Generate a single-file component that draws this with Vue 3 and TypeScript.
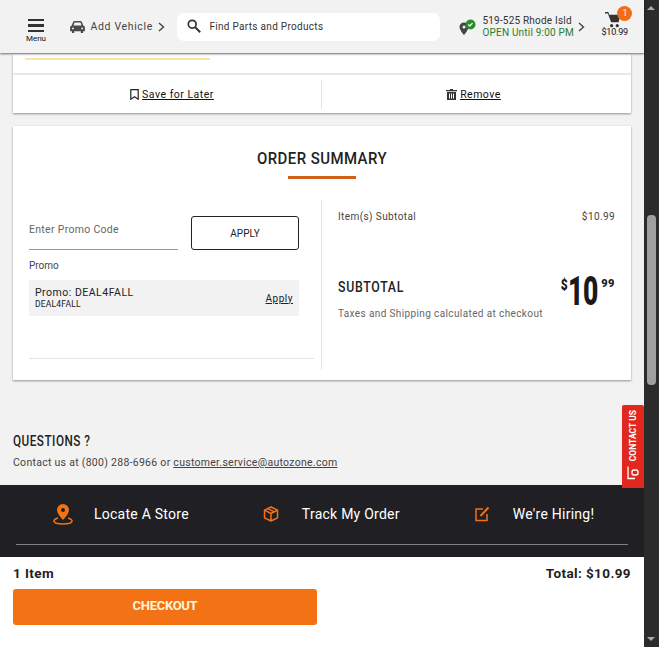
<script setup lang="ts">
const links = [
  { label: "Locate A Store", icon: "pin" },
  { label: "Track My Order", icon: "box" },
  { label: "We're Hiring!", icon: "edit" },
];
</script>

<template>
  <div class="page">
    <div class="main">
      <header class="top">
        <div class="menu">
          <span class="burger"><i></i><i></i><i></i></span>
          <span class="menu-label">Menu</span>
        </div>
        <div class="vehicle">
          <svg class="car" width="15" height="12" viewBox="0 0 16 13"><path fill="#4a4a4a" d="M3.2 1.2C3.5.5 4 0 4.8 0h6.400c.8 0 1.300.5 1.600 1.200L14.200 5c1 .3 1.800 1 1.800 2v4h-2v2h-2.400v-2H4.400v2H2v-2H0V7c0-1 .8-1.700 1.800-2zM4.700 1.600 3.700 4.800h8.600l-1-3.200zM3 7a1 1 0 1 0 0 2 1 1 0 0 0 0-2zm10 0a1 1 0 1 0 0 2 1 1 0 0 0 0-2z"/></svg>
          <span>Add Vehicle</span>
          <svg width="7" height="10" viewBox="0 0 7 10"><path fill="none" stroke="#444" stroke-width="1.400" d="M1 1l4.500 4L1 9"/></svg>
        </div>
        <div class="search">
          <svg width="14" height="14" viewBox="0 0 14 14"><circle cx="5.200" cy="5.200" r="3.900" fill="none" stroke="#333" stroke-width="1.700"/><path stroke="#333" stroke-width="2" d="M8.200 8.200l5 5"/></svg>
          <span>Find Parts and Products</span>
        </div>
        <div class="store">
          <svg class="pin-icon" width="17" height="16" viewBox="0 0 17 16">
            <path fill="#444" d="M5 3.500a4.500 4.500 0 0 1 4.500 4.500C9.500 11 5 16 5 16S.5 11 .5 8A4.500 4.500 0 0 1 5 3.500z"/>
            <circle cx="5" cy="8" r="1.500" fill="#f2f2f2"/>
            <circle cx="11.500" cy="5.500" r="5" fill="#2e8b2e"/>
            <path fill="none" stroke="#fff" stroke-width="1.200" d="M9.200 5.500l1.700 1.500 2.600-2.800"/>
          </svg>
          <div class="store-text">
            <div>519-525 Rhode Isld</div>
            <div class="open">OPEN Until 9:00 PM</div>
          </div>
          <svg width="7" height="10" viewBox="0 0 7 10"><path fill="none" stroke="#444" stroke-width="1.400" d="M1 1l4.500 4L1 9"/></svg>
        </div>
        <div class="cart">
          <svg class="cart-icon" width="17" height="16" viewBox="0 0 18 17"><path fill="#333" d="M0 0h3.500l1 3H16l-1.500 8H6.500L3 1.500H0z"/><circle cx="7" cy="14.500" r="1.700" fill="#333"/><circle cx="13" cy="14.500" r="1.700" fill="#333"/></svg>
          <span class="badge">1</span>
          <span class="cart-price">$10.99</span>
        </div>
      </header>

      <main class="content">
        <section class="card item-card">
          <div class="yellow"></div>
          <div class="actions">
            <div class="action save">
              <svg width="9" height="11" viewBox="0 0 9 11"><path fill="none" stroke="#222" stroke-width="1.200" d="M.8.7h7.400v9.500L4.500 7.800.8 10.200z"/></svg>
              <a>Save for Later</a>
            </div>
            <div class="action remove">
              <svg width="11" height="11" viewBox="0 0 11 11"><path fill="#333" d="M4 0h3v1h4v1.200H0V1h4zM1 3h9v8H1zm2 1.500v5h1v-5zm2 0v5h1v-5zm2 0v5h1v-5z"/></svg>
              <a>Remove</a>
            </div>
          </div>
        </section>

        <section class="card summary">
          <h2>ORDER SUMMARY</h2>
          <div class="rule"></div>
          <div class="columns">
            <div class="left">
              <div class="promo-form">
                <div class="promo-input">Enter Promo Code</div>
                <button class="apply-btn">APPLY</button>
              </div>
              <div class="promo-label">Promo</div>
              <div class="promo-box">
                <div>
                  <div class="promo-title">Promo: DEAL4FALL</div>
                  <div class="promo-code">DEAL4FALL</div>
                </div>
                <a class="promo-apply">Apply</a>
              </div>
              <div class="left-line"></div>
            </div>
            <div class="right">
              <div class="line-item"><span>Item(s) Subtotal</span><span>$10.99</span></div>
              <div class="subtotal">
                <div>
                  <div class="subtotal-label">SUBTOTAL</div>
                  <div class="taxes">Taxes and Shipping calculated at checkout</div>
                </div>
                <div class="price"><sup>$</sup><b>10</b><sup class="cents">99</sup></div>
              </div>
            </div>
          </div>
        </section>

        <section class="questions">
          <h3>QUESTIONS ?</h3>
          <p>Contact us at (800) 288-6966 or <a>customer.service@autozone.com</a></p>
        </section>
      </main>

      <footer class="dark">
        <div class="dark-links">
          <div v-for="l in links" :key="l.label" class="dark-link" :class="l.icon">
            <svg v-if="l.icon === 'pin'" width="22" height="22" viewBox="0 0 22 22">
              <path fill="#f37216" d="M11 1a6 6 0 0 1 6 6c0 4-6 10-6 10S5 11 5 7a6 6 0 0 1 6-6z"/>
              <circle cx="11" cy="7" r="2" fill="#1f1f24"/>
              <path fill="none" stroke="#f37216" stroke-width="1.500" d="M6 15c-3 1-4.500 2-4 3.500C2.500 20 7 21 11 21s8.500-1 9-2.500c.5-1.500-1-2.500-4-3.500"/>
            </svg>
            <svg v-else-if="l.icon === 'box'" width="16" height="16" viewBox="0 0 16 16">
              <path fill="none" stroke="#f37216" stroke-width="1.500" stroke-linejoin="round" d="M8 1l6.500 3.200v7.600L8 15l-6.500-3.200V4.200zM1.500 4.200 8 7.500l6.500-3.300M8 7.500V15M4.700 2.600l6.500 3.300"/>
            </svg>
            <svg v-else width="16" height="16" viewBox="0 0 16 16">
              <path fill="none" stroke="#f37216" stroke-width="1.500" d="M9 3H2v11.500h11V8"/>
              <path stroke="#f37216" stroke-width="2" d="M6.500 10 14.500 1.500"/>
            </svg>
            <span>{{ l.label }}</span>
          </div>
        </div>
        <div class="dark-line"></div>
      </footer>

      <div class="checkout-bar">
        <div class="checkout-row"><span>1 Item</span><span>Total: $10.99</span></div>
        <button class="checkout">CHECKOUT</button>
      </div>

      <div class="contact-tab">
        <span>CONTACT US</span>
        <svg width="13" height="15" viewBox="0 0 13 15"><path fill="none" stroke="#fff" stroke-width="1.300" d="M1 1.500v12h7"/><rect x="5" y="5" width="6" height="5" rx="2" fill="none" stroke="#fff" stroke-width="1.300"/></svg>
      </div>
    </div>

    <aside class="scrollbar">
      <span class="arrow up"></span>
      <span class="thumb"></span>
      <span class="arrow down"></span>
    </aside>
  </div>
</template>

<style scoped>
.page {
  display: flex;
  width: 659px;
  height: 647px;
  overflow: hidden;
  background: #f2f2f2;
  color: #222;
  font-family: Roboto, "Liberation Sans", sans-serif;
  font-size: 10.5px;
  letter-spacing: 0.5px;
}
.main {
  position: relative;
  width: 644px;
  display: flex;
  flex-direction: column;
}
.top {
  position: relative;
  z-index: 2;
  height: 53px;
  box-sizing: border-box;
  flex: none;
  display: flex;
  align-items: center;
  background: #f2f2f2;
  box-shadow: 0 1px 2px rgba(0, 0, 0, 0.55);
}
.menu {
  width: 32px;
  margin-left: 20px;
  display: flex;
  flex-direction: column;
  align-items: center;
  padding-top: 9px;
}
.burger {
  display: flex;
  flex-direction: column;
  gap: 3px;
}
.burger i {
  display: block;
  width: 16px;
  height: 2.5px;
  background: #333;
}
.menu-label {
  font-size: 8px;
  letter-spacing: 0;
  margin-top: 2px;
  color: #111;
}
.vehicle {
  display: flex;
  align-items: center;
  gap: 5.5px;
  margin-left: 18px;
  color: #444;
  letter-spacing: 0.65px;
}
.search {
  width: 263px;
  height: 28px;
  box-sizing: border-box;
  margin-left: 12px;
  padding: 0 0 1px 10px;
  background: #fff;
  border-radius: 7px;
  display: flex;
  align-items: center;
  gap: 8px;
  color: #333;
  font-size: 10px;
  letter-spacing: 0.3px;
}
.store {
  margin-left: 19px;
  display: flex;
  align-items: center;
  gap: 6px;
}
.store-text {
  font-size: 10px;
  line-height: 12px;
  letter-spacing: 0.2px;
  color: #333;
  width: 90px;
  white-space: nowrap;
}
.open {
  color: #2c7d2c;
}
.cart {
  position: relative;
  width: 30px;
  height: 36px;
  margin-left: 16px;
}
.cart-icon {
  position: absolute;
  left: 4px;
  top: 3px;
}
.badge {
  position: absolute;
  left: 16px;
  top: -3px;
  width: 15px;
  height: 15px;
  border-radius: 50%;
  background: #f26d14;
  color: #fff;
  font-size: 9px;
  line-height: 15px;
  text-align: center;
  letter-spacing: 0;
}
.cart-price {
  position: absolute;
  left: 0;
  top: 18px;
  font-size: 9px;
  letter-spacing: -0.2px;
  color: #111;
}
.content {
  flex: 1;
  min-height: 0;
  padding: 1px 13px 0;
}
.card {
  width: 618px;
  background: #fff;
  box-shadow: 0 1px 2px rgba(0, 0, 0, 0.4);
}
.item-card {
  height: 59px;
  display: flex;
  flex-direction: column;
}
.yellow {
  width: 185px;
  height: 2px;
  margin: 4px 0 0 12px;
  background: #f9e4a6;
}
.actions {
  margin-top: 13px;
  border-top: 2px solid #e8e8e8;
  flex: 1;
  display: flex;
  align-items: center;
}
.action {
  box-sizing: border-box;
  height: 29px;
  display: flex;
  align-items: center;
  justify-content: center;
  gap: 3px;
}
.action.save {
  width: 309px;
  padding-left: 10px;
  border-right: 1px solid #e4e4e4;
}
.action.remove {
  flex: 1;
  padding-right: 6px;
}
.action a {
  text-decoration: underline;
  color: #111;
}
.summary {
  margin-top: 13px;
  height: 254px;
  box-sizing: border-box;
  padding-top: 22px;
}
h2 {
  margin: 0;
  text-align: center;
  font-size: 17px;
  line-height: 20px;
  font-weight: 500;
  letter-spacing: 0.5px;
  color: #222;
  transform: scaleX(0.88);
}
.rule {
  width: 68px;
  height: 3px;
  margin: 8px auto 0;
  background: #d2601a;
}
.columns {
  display: flex;
  margin-top: 21px;
}
.left {
  flex: none;
  width: 309px;
  height: 170px;
  box-sizing: border-box;
  padding: 16px 0 0 16px;
  border-right: 1px solid #e4e4e4;
}
.promo-form {
  display: flex;
  align-items: flex-start;
  gap: 13px;
  height: 34px;
}
.promo-input {
  width: 149px;
  height: 34px;
  box-sizing: border-box;
  padding-top: 7px;
  border-bottom: 1px solid #999;
  color: #666;
  letter-spacing: 0.3px;
}
.apply-btn {
  width: 108px;
  height: 34px;
  padding-top: 2px;
  background: #fff;
  border: 1px solid #222;
  border-radius: 3px;
  font: inherit;
  font-size: 10px;
  color: #222;
}
.promo-label {
  margin-top: 9px;
  line-height: 13px;
  font-size: 10px;
  letter-spacing: 0;
  color: #444;
}
.promo-box {
  width: 270px;
  height: 36px;
  box-sizing: border-box;
  margin-top: 8px;
  padding: 0 6px;
  background: #f2f2f2;
  display: flex;
  align-items: center;
  justify-content: space-between;
}
.promo-title {
  font-size: 10.5px;
  line-height: 12px;
  letter-spacing: 0.5px;
}
.promo-code {
  font-size: 8.5px;
  line-height: 11px;
  letter-spacing: 0.2px;
}
.promo-apply {
  text-decoration: underline;
  font-size: 10px;
}
.left-line {
  margin-top: 42px;
  width: 285px;
  height: 1px;
  background: #e4e4e4;
}
.right {
  flex: 1;
  min-width: 0;
  padding: 10px 16px 0;
}
.line-item {
  display: flex;
  justify-content: space-between;
  color: #444;
  font-size: 10px;
  letter-spacing: 0.4px;
  line-height: 13px;
}
.subtotal {
  margin-top: 51px;
  display: flex;
  justify-content: space-between;
}
.subtotal-label {
  font-size: 14px;
  line-height: 17px;
  font-weight: 500;
  letter-spacing: 0.8px;
  color: #222;
  margin-top: 5px;
  transform: scaleX(0.88);
  transform-origin: left;
}
.taxes {
  margin-top: 11px;
  line-height: 13px;
  font-size: 10px;
  letter-spacing: 0.38px;
  color: #666;
  white-space: nowrap;
}
.price {
  display: flex;
  align-items: flex-start;
  height: 30px;
  margin-top: 3px;
  color: #1a1a1a;
  letter-spacing: 0;
}
.price sup {
  font-size: 15px;
  line-height: 17px;
  font-weight: 900;
  transform: scaleX(0.8);
}
.price sup.cents {
  font-size: 11px;
  letter-spacing: 0.5px;
  line-height: 14px;
  margin-left: 3px;
  transform: none;
}
.price b {
  width: 30px;
  font-size: 40px;
  line-height: 30px;
  font-weight: 900;
  letter-spacing: -0.5px;
  transform: scaleX(0.66);
  transform-origin: left;
}
.questions {
  padding-top: 54px;
}
h3 {
  margin: 0;
  font-size: 14.5px;
  line-height: 16px;
  font-weight: 500;
  letter-spacing: 0.6px;
  transform: scaleX(0.81);
  transform-origin: left;
}
p {
  margin: 6px 0 0;
  line-height: 13px;
  font-size: 10.5px;
  letter-spacing: 0.28px;
  color: #444;
}
p a {
  text-decoration: underline;
}
.dark {
  flex: none;
  height: 72px;
  box-sizing: border-box;
  background: #1f1f24;
  padding-top: 17px;
}
.dark-links {
  position: relative;
  height: 24px;
  display: flex;
  color: #fff;
}
.dark-link {
  display: flex;
  align-items: center;
  font-size: 14px;
  letter-spacing: 0.25px;
  white-space: nowrap;
}
.dark-link.pin {
  margin-left: 52px;
  gap: 20px;
}
.dark-link.box {
  margin-left: 74px;
  gap: 23px;
}
.dark-link.edit {
  margin-left: 74px;
  gap: 23px;
}
.dark-line {
  height: 1px;
  margin: 18px 16px 0;
  background: #808084;
}
.checkout-bar {
  flex: none;
  height: 90px;
  box-sizing: border-box;
  background: #fff;
  padding: 8px 13px 0;
}
.checkout-row {
  display: flex;
  justify-content: space-between;
  font-size: 13.5px;
  line-height: 17px;
  font-weight: 700;
  letter-spacing: 0.4px;
  color: #1f1f1f;
}
.checkout {
  display: block;
  width: 304px;
  height: 36px;
  margin-top: 7px;
  border: 0;
  border-radius: 3px;
  background: #f37216;
  color: #fff3d9;
  font: inherit;
  font-size: 13px;
  font-weight: 700;
  letter-spacing: -0.3px;
  padding-bottom: 4px;
}
.contact-tab {
  position: absolute;
  left: 622px;
  top: 405px;
  width: 22px;
  height: 83px;
  box-sizing: border-box;
  border-radius: 2px 2px 0 0;
  background: #e0281e;
  color: #fff;
  display: flex;
  flex-direction: column;
  align-items: center;
  padding-top: 5px;
  gap: 4px;
}
.contact-tab span {
  writing-mode: vertical-rl;
  transform: rotate(180deg);
  font-size: 8.5px;
  font-weight: 700;
  letter-spacing: 0;
  line-height: 12px;
  white-space: nowrap;
}
.scrollbar {
  position: relative;
  width: 15px;
  flex: none;
  background: #2b2b2b;
}
.arrow {
  position: absolute;
  left: 3px;
  width: 0;
  height: 0;
  border-left: 4.5px solid transparent;
  border-right: 4.5px solid transparent;
}
.arrow.up {
  top: 6px;
  border-bottom: 4px solid #a8a8a8;
}
.arrow.down {
  bottom: 6px;
  border-top: 4px solid #a8a8a8;
}
.thumb {
  position: absolute;
  left: 3px;
  top: 215px;
  width: 9px;
  height: 170px;
  border-radius: 4px;
  background: #9f9f9f;
}
</style>
